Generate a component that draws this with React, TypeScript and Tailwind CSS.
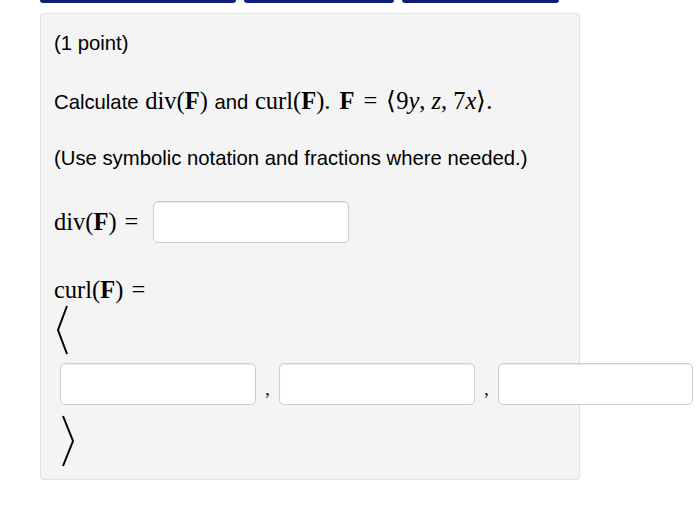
import React from "react";

const serif = { fontFamily: '"Liberation Serif", "Times New Roman", serif' };

function M({ children }: { children: React.ReactNode }) {
  return (
    <span className="text-[24.5px]" style={serif}>
      {children}
    </span>
  );
}

function Input({ w }: { w: string }) {
  return (
    <div
      className={`${w} h-[42px] bg-white border border-[#cdcdcd] rounded-[5px] shadow-[inset_0_1px_1px_rgba(0,0,0,0.08)] shrink-0`}
    />
  );
}

function Sp({ w }: { w: string }) {
  return <span className={`inline-block ${w}`} />;
}

export default function App() {
  return (
    <div
      className="w-[700px] h-[516px] bg-white text-black overflow-hidden"
      style={{ fontFamily: '"Liberation Sans", Arial, sans-serif' }}
    >
      <div className="flex ml-[40px] gap-[8px]">
        <div className="w-[196px] h-[3px] bg-[#0f1e72] rounded-b-[3px]" />
        <div className="w-[150px] h-[3px] bg-[#0f1e72] rounded-b-[3px]" />
        <div className="w-[157px] h-[3px] bg-[#0f1e72] rounded-b-[3px]" />
      </div>
      <div className="ml-[40px] mt-[10px] w-[540px] h-[467px] bg-[#f4f4f4] border border-[#e2e2e2] rounded-[3px] pl-[13px] flex flex-col">
        <div className="mt-[17px] h-[24px] leading-[24px] text-[20.3px]">(1 point)</div>
        <div className="mt-[31px] h-[30px] leading-[30px] text-[20.3px] whitespace-nowrap">
          Calculate <Sp w="w-[1px]" />
          <M>
            div(<b>F</b>)
          </M>{" "}
          <Sp w="w-[1px]" />and <Sp w="w-[1px]" />
          <M>
            curl(<b>F</b>).<Sp w="w-[9px]" />
            <b>F</b>
            <Sp w="w-[9px]" />=
            <Sp w="w-[9px]" />⟨9<i>y</i>,<Sp w="w-[6px]" />
            <i>z</i>,<Sp w="w-[6px]" />7<i>x</i>⟩.
          </M>
        </div>
        <div className="mt-[30px] h-[24px] leading-[24px] text-[20.3px] whitespace-nowrap">
          (Use symbolic notation and fractions where needed.)
        </div>
        <div className="mt-[31px] h-[42px] flex items-center">
          <M>
            div(<b>F</b>)<Sp w="w-[8px]" />=
          </M>
          <div className="ml-[15px] shrink-0">
            <Input w="w-[196px]" />
          </div>
        </div>
        <div className="mt-[32px] h-[30px] leading-[30px] whitespace-nowrap">
          <M>
            curl(<b>F</b>)<Sp w="w-[8px]" />=
          </M>
        </div>
        <div className="ml-[2px] h-[50px]">
          <svg width="14" height="50" viewBox="0 0 14 50">
            <polyline points="11,1 2,25 11,49" fill="none" stroke="#000" strokeWidth="2" />
          </svg>
        </div>
        <div className="mt-[8px] ml-[6px] flex items-center">
          <Input w="w-[196px]" />
          <span className="w-[23px] shrink-0 text-center text-[18px] translate-y-[5px]" style={serif}>
            ,
          </span>
          <Input w="w-[196px]" />
          <span className="w-[23px] shrink-0 text-center text-[18px] translate-y-[5px]" style={serif}>
            ,
          </span>
          <Input w="w-[195px]" />
        </div>
        <div className="mt-[10px] ml-[8px] h-[52px]">
          <svg width="14" height="52" viewBox="0 0 14 52">
            <polyline points="1,1 11,26 1,51" fill="none" stroke="#000" strokeWidth="2" />
          </svg>
        </div>
      </div>
    </div>
  );
}
